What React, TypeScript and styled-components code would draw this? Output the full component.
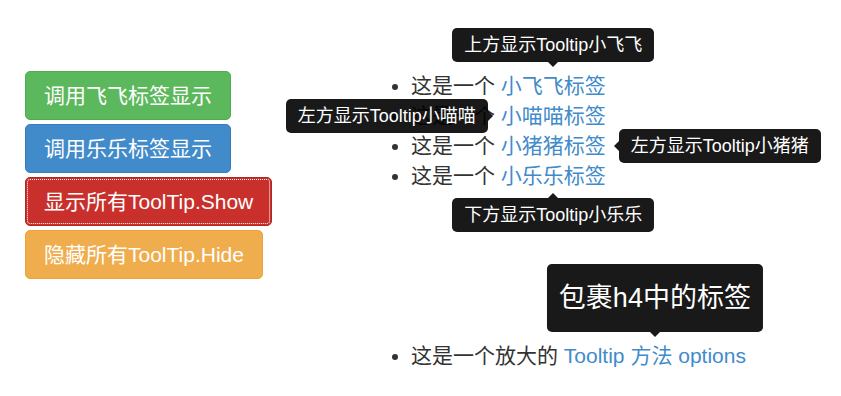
import React from 'react'
import styled, { createGlobalStyle, css } from 'styled-components'

type Placement = 'top' | 'bottom' | 'left' | 'right'
type Variant = 'success' | 'primary' | 'danger' | 'warning'

const GlobalStyle = createGlobalStyle`
  body {
    margin: 0;
    background: #fff;
    color: #333;
    font-family: "Liberation Sans", "Noto Sans CJK SC", sans-serif;
    font-size: 21px;
    line-height: 30px;
  }
`

const Page = styled.div`
  display: flex;
  align-items: flex-start;
  padding: 71px 0 0 25px;
`

const ButtonColumn = styled.div`
  display: flex;
  flex-direction: column;
  align-items: flex-start;
  gap: 4px;
  width: 351px;
  flex-shrink: 0;
`

const variants = {
  success: css`background: #5cb85c; border-color: #4cae4c;`,
  primary: css`background: #428bca; border-color: #357ebd;`,
  danger: css`
    background: #c9302c;
    border-color: #ac2925;
    outline: 1px dotted #fff;
    outline-offset: -3px;
  `,
  warning: css`background: #f0ad4e; border-color: #eea236;`,
}

const Button = styled.button<{ $variant: Variant }>`
  height: 49px;
  padding: 0 18px;
  border: 1px solid;
  border-radius: 5px;
  color: #fff;
  font-family: inherit;
  font-size: 21px;
  line-height: 30px;
  cursor: pointer;
  ${p => variants[p.$variant]}
`

const RightColumn = styled.div`
  display: flex;
  flex-direction: column;
`

const List = styled.ul<{ $gap?: number }>`
  margin: ${p => p.$gap || 0}px 0 0;
  padding-left: 35px;
  list-style: disc;

  li {
    line-height: 30px;
  }
`

const Anchor = styled.a`
  position: relative;
  color: #428bca;
  text-decoration: none;
`

const placements = {
  top: css`
    bottom: calc(100% + 12px);
    left: 50%;
    transform: translateX(-50%);
    &::after {
      top: 100%;
      left: 50%;
      margin-left: -5px;
      border-width: 5px 5px 0;
      border-top-color: rgba(0, 0, 0, 0.9);
    }
  `,
  bottom: css`
    top: calc(100% + 11px);
    left: 50%;
    transform: translateX(-50%);
    &::after {
      bottom: 100%;
      left: 50%;
      margin-left: -5px;
      border-width: 0 5px 5px;
      border-bottom-color: rgba(0, 0, 0, 0.9);
    }
  `,
  left: css`
    right: calc(100% + 13px);
    top: 50%;
    transform: translateY(-50%);
    &::after {
      left: 100%;
      top: 50%;
      margin-top: -5px;
      border-width: 5px 0 5px 5px;
      border-left-color: rgba(0, 0, 0, 0.9);
    }
  `,
  right: css`
    left: calc(100% + 13px);
    top: 50%;
    transform: translateY(-50%);
    &::after {
      right: 100%;
      top: 50%;
      margin-top: -5px;
      border-width: 5px 5px 5px 0;
      border-right-color: rgba(0, 0, 0, 0.9);
    }
  `,
}

const Tip = styled.span<{ $placement: Placement }>`
  position: absolute;
  z-index: 10;
  padding: 4px 12px;
  border-radius: 5px;
  background: rgba(0, 0, 0, 0.9);
  color: #fff;
  font-size: 18px;
  line-height: 26px;
  white-space: nowrap;

  &::after {
    content: "";
    position: absolute;
    width: 0;
    height: 0;
    border-style: solid;
    border-color: transparent;
  }

  ${p => placements[p.$placement]}
`

const TipHeading = styled.h4`
  margin: 15px 0;
  font-size: 27px;
  font-weight: normal;
  line-height: 30px;
`

const links: { label: string; tip: string; placement: Placement }[] = [
  { label: '小飞飞标签', tip: '上方显示Tooltip小飞飞', placement: 'top' },
  { label: '小喵喵标签', tip: '左方显示Tooltip小喵喵', placement: 'left' },
  { label: '小猪猪标签', tip: '左方显示Tooltip小猪猪', placement: 'right' },
  { label: '小乐乐标签', tip: '下方显示Tooltip小乐乐', placement: 'bottom' },
]

const App = () => {
  return (
    <>
      <GlobalStyle />
      <Page>
        <ButtonColumn>
          <Button $variant="success">调用飞飞标签显示</Button>
          <Button $variant="primary">调用乐乐标签显示</Button>
          <Button $variant="danger">显示所有ToolTip.Show</Button>
          <Button $variant="warning">隐藏所有ToolTip.Hide</Button>
        </ButtonColumn>
        <RightColumn>
          <List>
            {links.map(item => (
              <li key={item.label}>
                这是一个{' '}
                <Anchor href="#">
                  {item.label}
                  <Tip $placement={item.placement}>{item.tip}</Tip>
                </Anchor>
              </li>
            ))}
          </List>
          <List $gap={150}>
            <li>
              这是一个放大的{' '}
              <Anchor href="#">
                Tooltip 方法 options
                <Tip $placement="top">
                  <TipHeading>包裹h4中的标签</TipHeading>
                </Tip>
              </Anchor>
            </li>
          </List>
        </RightColumn>
      </Page>
    </>
  )
}

export default App
